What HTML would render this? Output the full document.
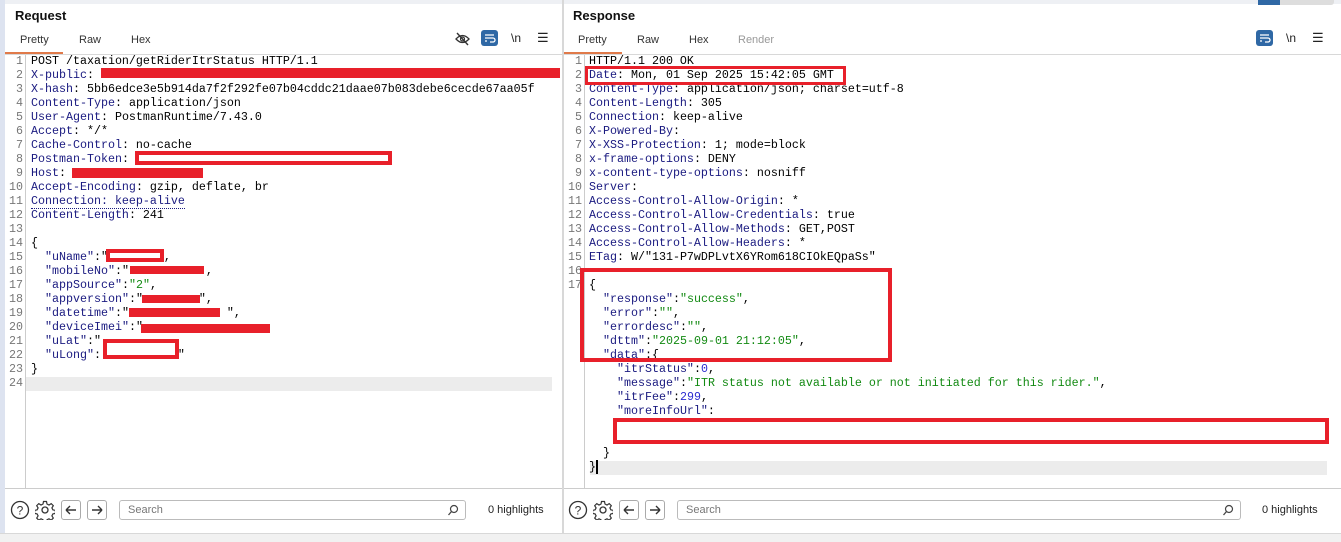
<!DOCTYPE html>
<html><head><meta charset="utf-8"><style>
*{margin:0;padding:0;box-sizing:border-box}
body{width:1341px;height:542px;background:#fff;position:relative;overflow:hidden;font-family:"Liberation Sans",sans-serif;color:#222}
.a{position:absolute}
.code{font-family:"Liberation Mono",monospace;font-size:11.67px;line-height:14px;white-space:pre;color:#000}
.ln{font-family:"Liberation Mono",monospace;font-size:11.67px;line-height:14px;white-space:pre;color:#777;text-align:right}
.k{color:#1a1a80}.s{color:#138a13}.n{color:#2a2ad0}
.tab{font-size:11px;color:#333}
.rb{background:#e8202a}
.bx{border:4px solid #e8202a;background:#fff}
.btn{border:1px solid #aaa;border-radius:3px;width:20px;height:20px;background:#fff}
.srch{border:1px solid #bbb;border-radius:3px;height:20px;font-size:11px;color:#777;padding:3px 8px;background:#fff}
.hl{font-size:11px;color:#222}
</style></head><body>
<div class="a" style="left:0;top:0;width:1341px;height:4px;background:#eef0f4"></div>
<div class="a" style="left:0;top:0;width:5px;height:542px;background:#dde3f0"></div>
<div class="a" style="left:1258px;top:0;width:76px;height:5px;background:#ddd;border-radius:0 0 3px 3px"></div>
<div class="a" style="left:1258px;top:0;width:22px;height:5px;background:#2f68a5"></div>
<div class="a" style="left:562px;top:0;width:2px;height:534px;background:#d8d8d8"></div>
<div class="a" style="left:0;top:533px;width:1341px;height:9px;background:#f1f1f1;border-top:1px solid #d8d8d8"></div>

<!-- LEFT -->
<div class="a" style="left:15px;top:8px;font-weight:bold;font-size:13px;color:#111">Request</div>
<div class="a tab" style="left:20px;top:34px">Pretty</div>
<div class="a tab" style="left:79px;top:34px">Raw</div>
<div class="a tab" style="left:131px;top:34px">Hex</div>
<div class="a" style="left:5px;top:52px;width:58px;height:2px;background:#e07a4a"></div>
<div class="a" style="left:5px;top:54px;width:557px;height:1px;background:#d8d8d8"></div>
<svg class="a" style="left:455px;top:32px" width="15" height="14" viewBox="0 0 15 14"><path d="M1 7 Q7.5 0 14 7 Q7.5 14 1 7Z" fill="none" stroke="#333" stroke-width="1.3"/><circle cx="7.5" cy="7" r="2" fill="none" stroke="#333" stroke-width="1.2"/><path d="M2 1 L13 13" stroke="#333" stroke-width="1.4"/></svg>
<div class="a" style="left:481px;top:30px;width:17px;height:16px;background:#2f68a5;border-radius:3px"><svg width="17" height="16"><path d="M4 5h9M4 8h8a2 2 0 0 1 0 4h-3M4 11h2" stroke="#fff" stroke-width="1.3" fill="none"/></svg></div>
<div class="a" style="left:511px;top:31px;font-size:12px;color:#222">\n</div>
<div class="a" style="left:537px;top:30px;font-size:13px;color:#222">☰</div>
<div class="a" style="left:25px;top:55px;width:1px;height:433px;background:#ccc"></div>
<div class="a" style="left:26px;top:377px;width:526px;height:14px;background:#ececec"></div>
<div class="a ln" style="left:5px;top:54px;width:18px">1
2
3
4
5
6
7
8
9
10
11
12
13
14
15
16
17
18
19
20
21
22
23
24</div>
<div class="a code" style="left:31px;top:54px">POST /taxation/getRiderItrStatus HTTP/1.1
<span class="k">X-public</span>:
<span class="k">X-hash</span>: 5bb6edce3e5b914da7f2f292fe07b04cddc21daae07b083debe6cecde67aa05f
<span class="k">Content-Type</span>: application/json
<span class="k">User-Agent</span>: PostmanRuntime/7.43.0
<span class="k">Accept</span>: */*
<span class="k">Cache-Control</span>: no-cache
<span class="k">Postman-Token</span>:
<span class="k">Host</span>:
<span class="k">Accept-Encoding</span>: gzip, deflate, br
<span class="k" style="border-bottom:1px dotted #1a1a80">Connection: keep-alive</span>
<span class="k">Content-Length</span>: 241

{
  <span class="k">"uName"</span>:"        ,
  <span class="k">"mobileNo"</span>:"           ,
  <span class="k">"appSource"</span>:<span class="s">"2"</span>,
  <span class="k">"appversion"</span>:"        ",
  <span class="k">"datetime"</span>:"              ",
  <span class="k">"deviceImei"</span>:"
  <span class="k">"uLat"</span>:"          ,
  <span class="k">"uLong"</span>:           "
}
</div>
<div class="a rb" style="left:101px;top:68px;width:459px;height:10px"></div>
<div class="a bx" style="left:135px;top:151px;width:257px;height:14px"></div>
<div class="a rb" style="left:72px;top:168px;width:131px;height:10px"></div>
<div class="a bx" style="left:106px;top:249px;width:58px;height:13px"></div>
<div class="a rb" style="left:130px;top:266px;width:74px;height:8px"></div>
<div class="a rb" style="left:142px;top:295px;width:58px;height:8px"></div>
<div class="a rb" style="left:129px;top:308px;width:91px;height:9px"></div>
<div class="a rb" style="left:141px;top:324px;width:129px;height:9px"></div>
<div class="a bx" style="left:103px;top:339px;width:76px;height:20px"></div>

<div class="a" style="left:5px;top:488px;width:557px;height:1px;background:#ccc"></div>
<svg class="a" style="left:10px;top:500px" width="20" height="20"><circle cx="10" cy="10" r="8.5" fill="none" stroke="#333" stroke-width="1.3"/><text x="10" y="14.5" font-size="12" text-anchor="middle" fill="#333" font-family="Liberation Sans">?</text></svg>
<svg class="a" style="left:35px;top:500px" width="20" height="20" viewBox="0 0 20 20"><circle cx="10" cy="10" r="3" fill="none" stroke="#333" stroke-width="1.3"/><path d="M8.5 1.5h3l.5 2.5 2 1 2.2-1.4 2.1 2.1-1.4 2.2 1 2 2.5.5v3l-2.5.5-1 2 1.4 2.2-2.1 2.1-2.2-1.4-2 1-.5 2.5h-3l-.5-2.5-2-1-2.2 1.4-2.1-2.1 1.4-2.2-1-2-2.5-.5v-3l2.5-.5 1-2-1.4-2.2 2.1-2.1 2.2 1.4 2-1z" fill="none" stroke="#333" stroke-width="1.2"/></svg>
<div class="a btn" style="left:61px;top:500px"><svg width="18" height="18"><path d="M4 9h10M4 9l4-4M4 9l4 4" stroke="#333" stroke-width="1.4" fill="none"/></svg></div>
<div class="a btn" style="left:87px;top:500px"><svg width="18" height="18"><path d="M4 9h10M14 9l-4-4M14 9l-4 4" stroke="#333" stroke-width="1.4" fill="none"/></svg></div>
<div class="a srch" style="left:119px;top:500px;width:347px">Search<svg style="position:absolute;right:6px;top:3px" width="12" height="12"><circle cx="7" cy="5" r="3.5" fill="none" stroke="#444" stroke-width="1.2"/><path d="M4.5 7.5L1.5 11" stroke="#444" stroke-width="1.3"/></svg></div>
<div class="a hl" style="left:488px;top:504px">0 highlights</div>

<!-- RIGHT -->
<div class="a" style="left:573px;top:8px;font-weight:bold;font-size:13px;color:#111">Response</div>
<div class="a tab" style="left:578px;top:34px">Pretty</div>
<div class="a tab" style="left:637px;top:34px">Raw</div>
<div class="a tab" style="left:689px;top:34px">Hex</div>
<div class="a tab" style="left:738px;top:34px;color:#999">Render</div>
<div class="a" style="left:564px;top:52px;width:58px;height:2px;background:#e07a4a"></div>
<div class="a" style="left:564px;top:54px;width:777px;height:1px;background:#d8d8d8"></div>
<div class="a" style="left:1256px;top:30px;width:17px;height:16px;background:#2f68a5;border-radius:3px"><svg width="17" height="16"><path d="M4 5h9M4 8h8a2 2 0 0 1 0 4h-3M4 11h2" stroke="#fff" stroke-width="1.3" fill="none"/></svg></div>
<div class="a" style="left:1286px;top:31px;font-size:12px;color:#222">\n</div>
<div class="a" style="left:1312px;top:30px;font-size:13px;color:#222">☰</div>
<div class="a" style="left:584px;top:55px;width:1px;height:433px;background:#ccc"></div>
<div class="a" style="left:590px;top:461px;width:737px;height:14px;background:#ececec"></div>
<div class="a ln" style="left:564px;top:54px;width:18px">1
2
3
4
5
6
7
8
9
10
11
12
13
14
15
16
17</div>
<div class="a code" style="left:589px;top:54px">HTTP/1.1 200 OK
<span class="k">Date</span>: Mon, 01 Sep 2025 15:42:05 GMT
<span class="k">Content-Type</span>: application/json; charset=utf-8
<span class="k">Content-Length</span>: 305
<span class="k">Connection</span>: keep-alive
<span class="k">X-Powered-By</span>:
<span class="k">X-XSS-Protection</span>: 1; mode=block
<span class="k">x-frame-options</span>: DENY
<span class="k">x-content-type-options</span>: nosniff
<span class="k">Server</span>:
<span class="k">Access-Control-Allow-Origin</span>: *
<span class="k">Access-Control-Allow-Credentials</span>: true
<span class="k">Access-Control-Allow-Methods</span>: GET,POST
<span class="k">Access-Control-Allow-Headers</span>: *
<span class="k">ETag</span>: W/"131-P7wDPLvtX6YRom618CIOkEQpaSs"

{
  <span class="k">"response"</span>:<span class="s">"success"</span>,
  <span class="k">"error"</span>:<span class="s">""</span>,
  <span class="k">"errordesc"</span>:<span class="s">""</span>,
  <span class="k">"dttm"</span>:<span class="s">"2025-09-01 21:12:05"</span>,
  <span class="k">"data"</span>:{
    <span class="k">"itrStatus"</span>:<span class="n">0</span>,
    <span class="k">"message"</span>:<span class="s">"ITR status not available or not initiated for this rider."</span>,
    <span class="k">"itrFee"</span>:<span class="n">299</span>,
    <span class="k">"moreInfoUrl"</span>:


  }
}<span style="border-left:2px solid #000"></span></div>
<div class="a" style="left:585px;top:66px;width:261px;height:19px;border:3px solid #e8202a"></div>
<div class="a" style="left:580px;top:268px;width:312px;height:94px;border:4px solid #e8202a"></div>
<div class="a" style="left:613px;top:418px;width:716px;height:26px;border:4px solid #e8202a"></div>

<div class="a" style="left:564px;top:488px;width:777px;height:1px;background:#ccc"></div>
<svg class="a" style="left:568px;top:500px" width="20" height="20"><circle cx="10" cy="10" r="8.5" fill="none" stroke="#333" stroke-width="1.3"/><text x="10" y="14.5" font-size="12" text-anchor="middle" fill="#333" font-family="Liberation Sans">?</text></svg>
<svg class="a" style="left:593px;top:500px" width="20" height="20" viewBox="0 0 20 20"><circle cx="10" cy="10" r="3" fill="none" stroke="#333" stroke-width="1.3"/><path d="M8.5 1.5h3l.5 2.5 2 1 2.2-1.4 2.1 2.1-1.4 2.2 1 2 2.5.5v3l-2.5.5-1 2 1.4 2.2-2.1 2.1-2.2-1.4-2 1-.5 2.5h-3l-.5-2.5-2-1-2.2 1.4-2.1-2.1 1.4-2.2-1-2-2.5-.5v-3l2.5-.5 1-2-1.4-2.2 2.1-2.1 2.2 1.4 2-1z" fill="none" stroke="#333" stroke-width="1.2"/></svg>
<div class="a btn" style="left:619px;top:500px"><svg width="18" height="18"><path d="M4 9h10M4 9l4-4M4 9l4 4" stroke="#333" stroke-width="1.4" fill="none"/></svg></div>
<div class="a btn" style="left:645px;top:500px"><svg width="18" height="18"><path d="M4 9h10M14 9l-4-4M14 9l-4 4" stroke="#333" stroke-width="1.4" fill="none"/></svg></div>
<div class="a srch" style="left:677px;top:500px;width:564px">Search<svg style="position:absolute;right:6px;top:3px" width="12" height="12"><circle cx="7" cy="5" r="3.5" fill="none" stroke="#444" stroke-width="1.2"/><path d="M4.5 7.5L1.5 11" stroke="#444" stroke-width="1.3"/></svg></div>
<div class="a hl" style="left:1262px;top:504px">0 highlights</div>
</body></html>
